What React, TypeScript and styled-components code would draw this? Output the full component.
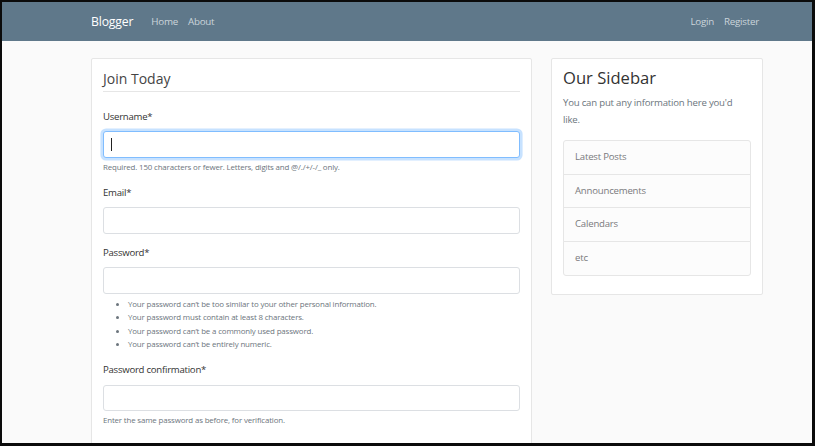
import React from "react";
import styled, { createGlobalStyle } from "styled-components";

const GlobalStyle = createGlobalStyle`
  html, body { margin: 0; padding: 0; background: #0b0b0b; }
  body { font-family: "Open Sans", "Noto Sans", sans-serif; color: #333333; }
  * { box-sizing: border-box; }
`;

const Frame = styled.div`
  width: 815px;
  height: 446px;
  border-style: solid;
  border-color: #0b0b0b;
  border-width: 2px 3px 3px 2px;
  background: #fafafa;
  overflow: hidden;
  display: flex;
  flex-direction: column;
`;

const NavBar = styled.header`
  height: 39px;
  flex: 0 0 39px;
  background: #5f788a;
`;

const Container = styled.div`
  margin-left: 89px;
  width: 672px;
`;

const NavInner = styled(Container)`
  height: 100%;
  display: flex;
  align-items: center;
`;

const Brand = styled.span`
  font-size: 12.2px;
  letter-spacing: -0.15px;
  color: #ffffff;
  margin-right: 18px;
`;

const NavGroup = styled.nav<{ $right?: boolean }>`
  display: flex;
  gap: 10px;
  margin-left: ${(p) => (p.$right ? "auto" : "0")};
  margin-right: ${(p) => (p.$right ? "4px" : "0")};
`;

const NavLink = styled.span`
  font-size: 9.8px;
  letter-spacing: -0.25px;
  color: #cbd5db;
`;

const Main = styled(Container)`
  padding-top: 17px;
  display: flex;
  gap: 19px;
  align-items: flex-start;
`;

const Section = styled.section<{ $width: number }>`
  width: ${(p) => p.$width}px;
  flex: 0 0 auto;
  background: #ffffff;
  border: 1px solid #e6e6e6;
  border-radius: 2px;
  padding: 7px 11px 7px;
`;

const Legend = styled.div`
  font-size: 14px;
  line-height: 25px;
  color: #444444;
  border-bottom: 1px solid #e6e6e6;
  margin-bottom: 17px;
`;

const FormGroup = styled.div<{ $mb?: number }>`
  margin-bottom: ${(p) => (p.$mb ?? 11)}px;
`;

const Label = styled.label`
  display: block;
  font-size: 9.6px;
  letter-spacing: -0.25px;
  line-height: 16.8px;
  margin-bottom: 5.4px;
  color: #333333;
`;

const Input = styled.div<{ $focus?: boolean }>`
  height: 26.6px;
  border: 1px solid ${(p) => (p.$focus ? "#80bdff" : "#dcdfe3")};
  border-radius: 3px;
  background: #ffffff;
  box-shadow: ${(p) => (p.$focus ? "0 0 0 2.6px rgba(0,123,255,.22)" : "none")};
  display: flex;
  align-items: center;
  padding-left: 7px;
`;

const Caret = styled.span`
  width: 1px;
  height: 13px;
  background: #222;
`;

const Help = styled.div`
  margin-top: 2.8px;
  font-size: 7.9px;
  letter-spacing: -0.15px;
  line-height: 13.4px;
  color: #6c757d;
`;

const HelpList = styled.ul`
  margin: 4.3px 0 4px;
  padding-left: 25px;
  font-size: 7.9px;
  letter-spacing: -0.15px;
  line-height: 13.4px;
  color: #6c757d;
  list-style: disc;
`;

const SideTitle = styled.h3`
  margin: 0 0 5.6px;
  font-size: 16.6px;
  font-weight: 500;
  line-height: 23.5px;
  color: #333333;
`;

const Muted = styled.p`
  margin: 0 0 11.2px;
  font-size: 9.6px;
  letter-spacing: -0.2px;
  line-height: 16.8px;
  color: #6c757d;
`;

const ListGroup = styled.ul`
  list-style: none;
  margin: 0 0 11.2px;
  padding: 0;
`;

const ListItem = styled.li`
  padding: 8px 11px;
  font-size: 9.6px;
  letter-spacing: -0.2px;
  line-height: 16.8px;
  color: #7a7a7c;
  background: #fcfcfc;
  border: 1px solid #e6e6e6;
  margin-bottom: -1px;
  &:first-child { border-radius: 3px 3px 0 0; }
  &:last-child { border-radius: 0 0 3px 3px; margin-bottom: 0; }
`;

const passwordRules = [
  "Your password can\u2019t be too similar to your other personal information.",
  "Your password must contain at least 8 characters.",
  "Your password can\u2019t be a commonly used password.",
  "Your password can\u2019t be entirely numeric.",
];

const sidebarItems = ["Latest Posts", "Announcements", "Calendars", "etc"];

export default function App() {
  return (
    <>
      <GlobalStyle />
      <Frame>
        <NavBar>
          <NavInner>
            <Brand>Blogger</Brand>
            <NavGroup>
              <NavLink>Home</NavLink>
              <NavLink>About</NavLink>
            </NavGroup>
            <NavGroup $right>
              <NavLink>Login</NavLink>
              <NavLink>Register</NavLink>
            </NavGroup>
          </NavInner>
        </NavBar>
        <Main>
          <Section $width={441}>
            <Legend>Join Today</Legend>
            <FormGroup>
              <Label>Username*</Label>
              <Input $focus>
                <Caret />
              </Input>
              <Help>Required. 150 characters or fewer. Letters, digits and @/./+/-/_ only.</Help>
            </FormGroup>
            <FormGroup>
              <Label>Email*</Label>
              <Input />
            </FormGroup>
            <FormGroup>
              <Label>Password*</Label>
              <Input />
              <HelpList>
                {passwordRules.map((r) => (
                  <li key={r}>{r}</li>
                ))}
              </HelpList>
            </FormGroup>
            <FormGroup>
              <Label>Password confirmation*</Label>
              <Input />
              <Help>Enter the same password as before, for verification.</Help>
            </FormGroup>
          </Section>
          <Section $width={212}>
            <SideTitle>Our Sidebar</SideTitle>
            <Muted>You can put any information here you'd like.</Muted>
            <ListGroup>
              {sidebarItems.map((s) => (
                <ListItem key={s}>{s}</ListItem>
              ))}
            </ListGroup>
          </Section>
        </Main>
      </Frame>
    </>
  );
}
